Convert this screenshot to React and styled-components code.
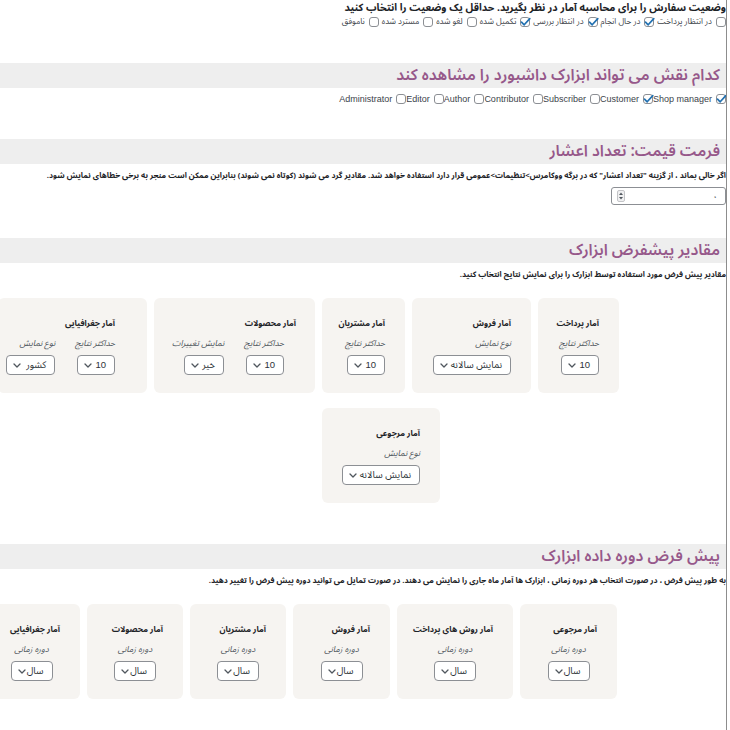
import React from 'react'
import styled, { createGlobalStyle } from 'styled-components'

const fa = `"Noto Sans Arabic", "DejaVu Sans Condensed", "DejaVu Sans", sans-serif`

const GlobalStyle = createGlobalStyle`
    html, body {
        margin: 0;
        padding: 0;
        background: #fff;
        overflow: hidden;
    }
    body {
        font-family: ${fa};
        color: #1d2327;
    }
`

const orderStatuses = [
    { title: 'در انتظار پرداخت', checked: false },
    { title: 'در حال انجام', checked: true },
    { title: 'در انتظار بررسی', checked: true },
    { title: 'تکمیل شده', checked: true },
    { title: 'لغو شده', checked: false },
    { title: 'مسترد شده', checked: false },
    { title: 'ناموفق', checked: false },
]

// roles are laid out left to right, each box sits right before its name
const roles = [
    { name: 'Administrator', box: null },
    { name: 'Editor', box: 'off' },
    { name: 'Author', box: 'off' },
    { name: 'Contributor', box: 'off' },
    { name: 'Subscriber', box: 'off' },
    { name: 'Customer', box: 'off' },
    { name: 'Shop manager', box: 'on' },
    { name: null, box: 'on' },
]

const widgetDefaults = [
    { title: 'آمار پرداخت', w: 81, fields: [{ label: 'حداکثر نتایج', value: '10', w: 38 }] },
    { title: 'آمار فروش', w: 119, fields: [{ label: 'نوع نمایش', value: 'نمایش سالانه', w: 78 }] },
    { title: 'آمار مشتریان', w: 83, fields: [{ label: 'حداکثر نتایج', value: '10', w: 38 }] },
    {
        title: 'آمار محصولات', w: 161, pr: 19, shift: 12,
        fields: [
            { label: 'حداکثر نتایج', value: '10', w: 38 },
            { label: 'نمایش تغییرات', value: 'خیر', w: 40 },
        ]
    },
    {
        title: 'آمار جغرافیایی', w: 149, pr: 32,
        fields: [
            { label: 'حداکثر نتایج', value: '10', w: 38 },
            { label: 'نوع نمایش', value: 'کشور', w: 49 },
        ]
    },
]

const refundDefault = { title: 'آمار مرجوعی', w: 118, fields: [{ label: 'نوع نمایش', value: 'نمایش سالانه', w: 78 }] }

const periodWidgets = [
    { title: 'آمار مرجوعی', w: 97 },
    { title: 'آمار روش های پرداخت', w: 116 },
    { title: 'آمار فروش', w: 97 },
    { title: 'آمار مشتریان', w: 96 },
    { title: 'آمار محصولات', w: 96 },
    { title: 'آمار جغرافیایی', w: 97 },
]

const CheckBox = ({ checked }) => (
    <Box>
        {checked &&
            <svg width='13' height='12' viewBox='0 0 13 12'>
                <path d='M2.5 6.2 L5.2 8.8 L10.8 2.6' fill='none' stroke='#2271b1' strokeWidth='1.7' strokeLinecap='round' strokeLinejoin='round' />
            </svg>
        }
    </Box>
)

const Chevron = () => (
    <svg width='8' height='5' viewBox='0 0 8 5'>
        <path d='M1 1 L4 4 L7 1' fill='none' stroke='#50575e' strokeWidth='1.3' strokeLinecap='round' strokeLinejoin='round' />
    </svg>
)

const Spinner = () => (
    <svg width='8' height='12' viewBox='0 0 8 12'>
        <rect x='0.5' y='0.5' width='7' height='11' rx='1.5' fill='#f0f0f1' stroke='#c3c4c7' />
        <path d='M2 5 L4 2.6 L6 5 Z' fill='#50575e' />
        <path d='M2 7 L4 9.4 L6 7 Z' fill='#50575e' />
    </svg>
)

const Dropdown = ({ value, w }) => (
    <Select $w={w}>
        <span>{value}</span>
        <Chevron />
    </Select>
)

const WidgetCard = ({ card, centered }) => (
    <Card $w={card.w} $pr={card.pr}>
        <CardTitle>{card.title}</CardTitle>
        <Fields $shift={card.shift} $center={centered}>
            {card.fields.map(f =>
                <Field key={f.label + f.value} $center={centered}>
                    <FieldLabel>{f.label}</FieldLabel>
                    <Dropdown value={f.value} w={f.w} />
                </Field>
            )}
        </Fields>
    </Card>
)

export default function App() {
    return (
        <Page>
            <GlobalStyle />
            <Intro>وضعیت سفارش را برای محاسبه آمار در نظر بگیرید. حداقل یک وضعیت را انتخاب کنید</Intro>
            <StatusRow>
                {orderStatuses.map(s =>
                    <StatusItem key={s.title}>
                        <CheckBox checked={s.checked} />
                        <span>{s.title}</span>
                    </StatusItem>
                )}
            </StatusRow>

            <Band $top={35}>کدام نقش می تواند ابزارک داشبورد را مشاهده کند</Band>
            <RoleRow>
                {roles.map((r, i) =>
                    <RoleItem key={i}>
                        {r.box && <CheckBox checked={r.box === 'on'} />}
                        {r.name && <span>{r.name}</span>}
                    </RoleItem>
                )}
            </RoleRow>

            <Band $top={34}>فرمت قیمت: تعداد اعشار</Band>
            <Desc>اگر خالی بماند ، از گزینه "تعداد اعشار" که در برگه ووکامرس&gt;تنظیمات&gt;عمومی قرار دارد استفاده خواهد شد. مقادیر گرد می شوند (کوتاه نمی شوند) بنابراین ممکن است منجر به برخی خطاهای نمایش شود.</Desc>
            <NumberBox>
                <span>۰</span>
                <Spinner />
            </NumberBox>

            <Band $top={33}>مقادیر پیشفرض ابزارک</Band>
            <Desc>مقادیر پیش فرض مورد استفاده توسط ابزارک را برای نمایش نتایج انتخاب کنید.</Desc>
            <CardRow $top={16} $inset={107}>
                {widgetDefaults.map(c => <WidgetCard key={c.title} card={c} />)}
            </CardRow>
            <CardRow $top={15} $inset={286}>
                <WidgetCard card={refundDefault} />
            </CardRow>

            <Band $top={41}>پیش فرض دوره داده ابزارک</Band>
            <Desc>به طور پیش فرض ، در صورت انتخاب هر دوره زمانی ، ابزارک ها آمار ماه جاری را نمایش می دهند. در صورت تمایل می توانید دوره پیش فرض را تغییر دهید.</Desc>
            <CardRow $top={16} $inset={109}>
                {periodWidgets.map(p =>
                    <WidgetCard
                        key={p.title}
                        centered
                        card={{ ...p, fields: [{ label: 'دوره زمانی', value: 'سال', w: 42 }] }}
                    />
                )}
            </CardRow>
        </Page>
    )
}

const Page = styled.div`
    direction: rtl;
    width: 726px;
    height: 730px;
    border-right: 1px solid #8d8d8d;
    overflow: hidden;
`

const Intro = styled.p`
    margin: 0;
    padding-top: 1px;
    font-size: 10.4px;
    font-weight: bold;
    line-height: 14px;
    white-space: nowrap;
`

const StatusRow = styled.div`
    display: flex;
    align-items: center;
    gap: 3px;
    height: 12px;
    margin-top: 1px;
`

const StatusItem = styled.label`
    display: flex;
    align-items: center;
    gap: 4px;
    font-size: 8.2px;
    line-height: 12px;
    color: #3c434a;
    white-space: nowrap;
`

const Box = styled.span`
    position: relative;
    flex: none;
    width: 10px;
    height: 10px;
    box-sizing: border-box;
    border: 1px solid #8c8f94;
    border-radius: 3px;
    background: #fff;

    & svg {
        position: absolute;
        left: -2px;
        top: -2px;
    }
`

const Band = styled.h2`
    margin: ${p => p.$top}px 0 0;
    height: 25px;
    padding-right: 6px;
    background: #eeeeee;
    color: #96588a;
    font-size: 15.7px;
    font-weight: 600;
    line-height: 25px;
    white-space: nowrap;
`

const RoleRow = styled.div`
    direction: ltr;
    display: flex;
    justify-content: flex-end;
    align-items: center;
    gap: 4px;
    height: 12px;
    margin-top: 5px;
    font-family: "Liberation Sans", Arial, sans-serif;
    font-size: 9px;
    line-height: 12px;
    color: #3c434a;
`

const RoleItem = styled.label`
    display: flex;
    align-items: center;
    white-space: nowrap;
`

const Desc = styled.p`
    margin: 5px 0 0;
    font-size: 7.85px;
    font-weight: bold;
    line-height: 14px;
    white-space: nowrap;
`

const NumberBox = styled.div`
    display: flex;
    justify-content: space-between;
    align-items: center;
    width: 115px;
    height: 18px;
    box-sizing: border-box;
    margin-top: 4px;
    padding: 0 7px 0 5px;
    border: 1px solid #8c8f94;
    border-radius: 3px;
    font-size: 10px;
    color: #3c434a;
`

const CardRow = styled.div`
    display: flex;
    align-items: flex-start;
    gap: 7px;
    margin-top: ${p => p.$top}px;
    padding-right: ${p => p.$inset}px;
`

const Card = styled.div`
    flex: none;
    width: ${p => p.$w}px;
    height: 95px;
    box-sizing: border-box;
    padding: 19px ${p => p.$pr || 20}px 0 20px;
    border-radius: 6px;
    background: #f6f4f1;
`

const CardTitle = styled.h4`
    margin: 0;
    font-size: 8.2px;
    font-weight: bold;
    line-height: 14px;
    color: #1d2327;
    white-space: nowrap;
`

const Fields = styled.div`
    display: flex;
    justify-content: ${p => p.$center ? 'center' : 'flex-start'};
    gap: 20px;
    margin-top: 5px;
    padding-right: ${p => p.$shift || 0}px;
`

const Field = styled.div`
    display: flex;
    flex-direction: column;
    align-items: ${p => p.$center ? 'center' : 'flex-start'};
    gap: 5px;
`

const FieldLabel = styled.span`
    font-size: 8.5px;
    font-style: italic;
    line-height: 14px;
    color: #50575e;
    white-space: nowrap;
`

const Select = styled.div`
    display: flex;
    justify-content: space-between;
    align-items: center;
    width: ${p => p.$w}px;
    height: 20px;
    box-sizing: border-box;
    padding: 0 8px 0 6px;
    border: 1px solid #8c8f94;
    border-radius: 4px;
    background: #fff;
    font-family: "Liberation Sans", ${fa};
    font-size: 9.5px;
    line-height: 18px;
    color: #2c3338;
    white-space: nowrap;
`
